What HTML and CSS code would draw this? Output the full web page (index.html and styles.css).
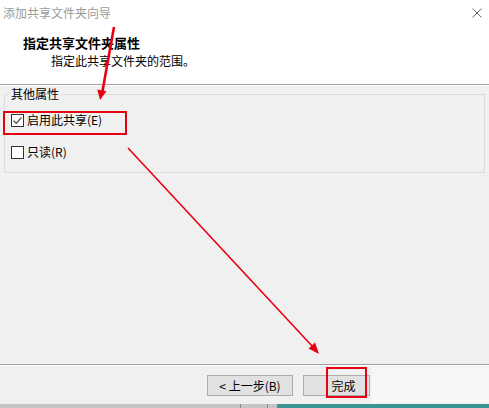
FILE: index.html
```html
<!DOCTYPE html>
<html lang="zh-CN">
<head>
<meta charset="utf-8">
<title>添加共享文件夹向导</title>
<link rel="stylesheet" href="styles.css">
</head>
<body>
<div class="window">
  <div class="titlebar">
    <span class="title">添加共享文件夹向导</span>
    <svg class="close" width="10" height="10" viewBox="0 0 10 10"><path d="M0.5 0.5 L9.5 9.5 M9.5 0.5 L0.5 9.5" stroke="#666" stroke-width="1" fill="none"/></svg>
  </div>
  <div class="header">
    <div class="h-title">指定共享文件夹属性</div>
    <div class="h-sub">指定此共享文件夹的范围。</div>
  </div>
  <div class="sep"></div>
  <div class="content">
    <fieldset class="group">
      <legend class="legend">其他属性</legend>
      <div class="row row-first">
        <span class="check">
          <svg width="11" height="11" viewBox="0 0 11 11"><path d="M1.5 5.5 L4.2 8.2 L9.5 2.5" stroke="#555" stroke-width="1.3" fill="none"/></svg>
        </span>
        <span class="label">启用此共享(E)</span>
      </div>
      <div class="row">
        <span class="check"></span>
        <span class="label">只读(R)</span>
      </div>
    </fieldset>
  </div>
  <div class="sep sep-bottom"></div>
  <div class="footer">
    <button class="btn btn-back">&lt; 上一步(B)</button>
    <button class="btn btn-finish">完成</button>
  </div>
  <div class="strip">
    <span class="strip-gray"></span>
    <span class="strip-line"></span>
    <span class="strip-gray2"></span>
    <span class="strip-line"></span>
    <span class="strip-gray3"></span>
    <span class="strip-teal"></span>
  </div>

  <div class="patch"></div>
  <div class="mark mark-share"></div>
  <div class="mark mark-finish"></div>
  <svg class="arrows" width="489" height="408" viewBox="0 0 489 408">
    <path d="M114 27 L102.5 91" stroke="#e60012" stroke-width="2.6" fill="none"/>
    <path d="M100 100 L97.3 89.5 L106.5 91.2 Z" fill="#e60012"/>
    <path d="M128 148 L313 347" stroke="#e60012" stroke-width="1.6" fill="none"/>
    <path d="M319 354 L308.5 348.5 L315 342.5 Z" fill="#e60012"/>
  </svg>
</div>
</body>
</html>
```

FILE: styles.css
```css
* { box-sizing: border-box; }
html, body {
  margin: 0;
  padding: 0;
  width: 489px;
  height: 408px;
  overflow: hidden;
  background: #f0f0f0;
}
body {
  font-family: "Noto Sans CJK SC", "Noto Sans", sans-serif;
  font-size: 12px;
  color: #000;
}
.window {
  position: relative;
  width: 489px;
  height: 408px;
  display: flex;
  flex-direction: column;
}
.titlebar {
  height: 25px;
  background: #fff;
  display: flex;
  align-items: center;
  justify-content: space-between;
  padding: 0 7px 0 3px;
}
.title {
  color: #9a9a9a;
  font-size: 12px;
  line-height: 25px;
}
.close { display: block; }
.header {
  height: 59px;
  background: #fff;
  padding-top: 9px;
}
.h-title {
  font-weight: bold;
  font-size: 13px;
  line-height: 18px;
  padding-left: 23px;
}
.h-sub {
  font-size: 12px;
  line-height: 18px;
  padding-left: 51px;
}
.sep {
  height: 2px;
  border-top: 1px solid #a0a0a0;
  border-bottom: 1px solid #fff;
}
.content {
  height: 278px;
  background: #f0f0f0;
  padding: 0 4px;
}
.group {
  margin: 0;
  margin-top: 0;
  border: 1px solid #dcdcdc;
  padding: 0 0 8px 6px;
  height: 87px;
}
.legend {
  padding: 0 2px;
  margin-left: -2px;
  line-height: 16px;
  font-size: 12px;
}
.row {
  display: flex;
  align-items: center;
  height: 22px;
  margin-top: 10px;
}
.row-first { margin-top: 7px; }
.check {
  width: 13px;
  height: 13px;
  border: 1px solid #333;
  background: #fff;
  display: flex;
  align-items: center;
  justify-content: center;
  margin-right: 3px;
}
.check svg { display: block; }
.label {
  font-size: 12px;
  line-height: 22px;
}
.sep-bottom { margin: 0; }
.footer {
  height: 38px;
  background: #f0f0f0;
  display: flex;
  justify-content: flex-end;
  gap: 10px;
  padding: 9px 119px 0 0;
}
.btn {
  height: 21px;
  border: 1px solid #adadad;
  background: #e1e1e1;
  font-family: "Noto Sans CJK SC", "Noto Sans", sans-serif;
  font-size: 12px;
  line-height: 19px;
  padding: 0;
  color: #000;
}
.btn-back { width: 86px; }
.btn-finish { width: 67px; padding-left: 14px; }
.strip {
  flex: 1;
  display: flex;
  background: #c4c4c4;
}
.strip-gray { width: 240px; }
.strip-line { width: 1px; background: #8a8a8a; }
.strip-gray2 { width: 26px; }
.strip-gray3 { width: 9px; }
.strip-teal { flex: 1; background: #3a9595; }
.patch {
  position: absolute;
  left: 372px;
  top: 367px;
  width: 117px;
  height: 36px;
  background: #f7f7f7;
}
.mark {
  position: absolute;
  border: 2px solid #e60012;
}
.mark-share {
  left: 3px;
  top: 111px;
  width: 124px;
  height: 24px;
}
.mark-finish {
  left: 326px;
  top: 367px;
  width: 41px;
  height: 31px;
}
.arrows {
  position: absolute;
  left: 0;
  top: 0;
  pointer-events: none;
}
```
